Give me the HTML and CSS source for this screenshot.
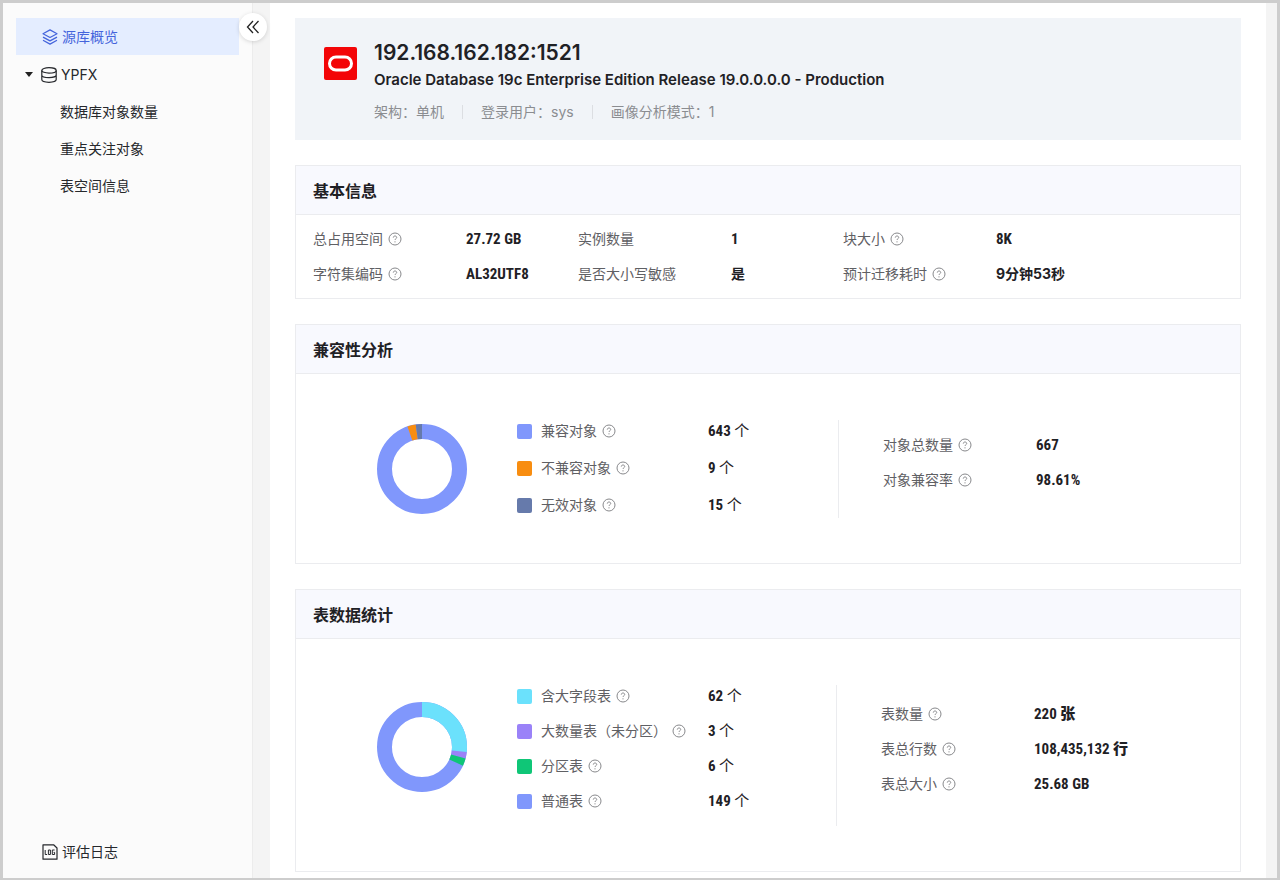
FILE: index.html
```html
<!DOCTYPE html>
<html lang="zh-CN">
<head>
    <meta charset="UTF-8">
    <title>源库概览</title>
    <link rel="stylesheet" href="styles.css">
</head>
<body>
    <svg class="sprite" aria-hidden="true">
        <symbol id="help" viewBox="0 0 14 14">
            <circle cx="7" cy="7" r="6" fill="none" stroke="currentColor"/>
            <path d="M5.3 5.6C5.3 4.6 6 4 7 4s1.7.6 1.7 1.5c0 1.2-1.7 1.3-1.7 2.5" fill="none" stroke="currentColor"/>
            <circle cx="7" cy="9.8" r=".65" fill="currentColor"/>
        </symbol>
    </svg>

    <aside class="sidebar">
        <nav class="menu">
            <a class="menu-item active" href="#">
                <svg class="icon" viewBox="0 0 16 16"><path d="M8 .9 15 4.7 8 8.5 1 4.7zM1 8.1l7 3.8 7-3.8M1 11.3l7 3.8 7-3.8"/></svg>
                源库概览
            </a>
            <button class="menu-item" type="button" aria-expanded="true">
                <span class="caret"></span>
                <svg class="icon" viewBox="0 0 16 16"><ellipse cx="8" cy="3.4" rx="7.2" ry="2.7"/><path d="M.8 3.4v9.2c0 1.5 3.2 2.7 7.2 2.7s7.2-1.2 7.2-2.7V3.4M.8 8c0 1.5 3.2 2.7 7.2 2.7s7.2-1.2 7.2-2.7"/></svg>
                YPFX
            </button>
            <a class="menu-item sub" href="#">数据库对象数量</a>
            <a class="menu-item sub" href="#">重点关注对象</a>
            <a class="menu-item sub" href="#">表空间信息</a>
        </nav>
        <a class="menu-item" href="#">
            <svg class="icon" viewBox="0 0 16 16"><path d="M1 .8h10.6L15 4v11.2H1z"/><path class="thin" d="M3.2 6v4.5h1.9M6.4 6h2v4.5h-2zM12.6 6h-2.3v4.5h2.3V8.4h-1"/></svg>
            评估日志
        </a>
        <button class="collapse" type="button" aria-label="收起">
            <svg viewBox="0 0 16 16"><path d="M8 2 2.5 8 8 14M13.5 2 8 8l5.500 6"/></svg>
        </button>
    </aside>

    <main class="content">
        <header class="hero">
            <svg class="logo" viewBox="0 0 33 33"><rect width="33" height="33" rx="2" fill="#f30507"/><rect x="5.500" y="10" width="22" height="13" rx="6.500" fill="none" stroke="#fff" stroke-width="3"/></svg>
            <div>
                <h1>192.168.162.182:1521</h1>
                <h2>Oracle Database 19c Enterprise Edition Release 19.0.0.0.0 - Production</h2>
                <ul class="meta">
                    <li>架构：单机</li>
                    <li>登录用户：sys</li>
                    <li>画像分析模式：1</li>
                </ul>
            </div>
        </header>

        <section class="card">
            <h3>基本信息</h3>
            <dl class="info">
                <div class="row"><dt>总占用空间 <svg class="help"><use href="#help"/></svg></dt><dd class="num">27.72 GB</dd></div>
                <div class="row"><dt>实例数量</dt><dd class="num">1</dd></div>
                <div class="row"><dt>块大小 <svg class="help"><use href="#help"/></svg></dt><dd class="num">8K</dd></div>
                <div class="row"><dt>字符集编码 <svg class="help"><use href="#help"/></svg></dt><dd class="num">AL32UTF8</dd></div>
                <div class="row"><dt>是否大小写敏感</dt><dd>是</dd></div>
                <div class="row"><dt>预计迁移耗时 <svg class="help"><use href="#help"/></svg></dt><dd>9分钟53秒</dd></div>
            </dl>
        </section>

        <section class="card">
            <h3>兼容性分析</h3>
            <div class="analysis">
                <div class="chart">
                    <!-- ring segments: pathLength is the number of objects -->
                    <svg class="donut" viewBox="0 0 90 90">
                        <circle class="blue" cx="45" cy="45" r="37.500"/>
                        <circle class="orange" cx="45" cy="45" r="37.500" pathLength="667" stroke-dasharray="20 647" stroke-dashoffset="35"/>
                        <circle class="slate" cx="45" cy="45" r="37.500" pathLength="667" stroke-dasharray="15 652" stroke-dashoffset="15"/>
                    </svg>
                    <dl class="legend">
                        <div class="row"><dt><i class="swatch blue"></i>兼容对象 <svg class="help"><use href="#help"/></svg></dt><dd class="num">643 <span>个</span></dd></div>
                        <div class="row"><dt><i class="swatch orange"></i>不兼容对象 <svg class="help"><use href="#help"/></svg></dt><dd class="num">9 <span>个</span></dd></div>
                        <div class="row"><dt><i class="swatch slate"></i>无效对象 <svg class="help"><use href="#help"/></svg></dt><dd class="num">15 <span>个</span></dd></div>
                    </dl>
                </div>
                <dl class="totals">
                    <div class="row"><dt>对象总数量 <svg class="help"><use href="#help"/></svg></dt><dd class="num">667</dd></div>
                    <div class="row"><dt>对象兼容率 <svg class="help"><use href="#help"/></svg></dt><dd class="num">98.61%</dd></div>
                </dl>
            </div>
        </section>

        <section class="card">
            <h3>表数据统计</h3>
            <div class="analysis tables">
                <div class="chart">
                    <!-- ring segments: pathLength is the number of tables -->
                    <svg class="donut" viewBox="0 0 90 90">
                        <circle class="blue" cx="45" cy="45" r="37.500"/>
                        <circle class="cyan" cx="45" cy="45" r="37.500" pathLength="220" stroke-dasharray="60 160"/>
                        <circle class="purple" cx="45" cy="45" r="37.500" pathLength="220" stroke-dasharray="5 215" stroke-dashoffset="-59"/>
                        <circle class="green" cx="45" cy="45" r="37.500" pathLength="220" stroke-dasharray="6 214" stroke-dashoffset="-64"/>
                    </svg>
                    <dl class="legend">
                        <div class="row"><dt><i class="swatch cyan"></i>含大字段表 <svg class="help"><use href="#help"/></svg></dt><dd class="num">62 <span>个</span></dd></div>
                        <div class="row"><dt><i class="swatch purple"></i>大数量表（未分区） <svg class="help"><use href="#help"/></svg></dt><dd class="num">3 <span>个</span></dd></div>
                        <div class="row"><dt><i class="swatch green"></i>分区表 <svg class="help"><use href="#help"/></svg></dt><dd class="num">6 <span>个</span></dd></div>
                        <div class="row"><dt><i class="swatch blue"></i>普通表 <svg class="help"><use href="#help"/></svg></dt><dd class="num">149 <span>个</span></dd></div>
                    </dl>
                </div>
                <dl class="totals">
                    <div class="row"><dt>表数量 <svg class="help"><use href="#help"/></svg></dt><dd class="num">220 <b>张</b></dd></div>
                    <div class="row"><dt>表总行数 <svg class="help"><use href="#help"/></svg></dt><dd class="num">108,435,132 <b>行</b></dd></div>
                    <div class="row"><dt>表总大小 <svg class="help"><use href="#help"/></svg></dt><dd class="num">25.68 GB</dd></div>
                </dl>
            </div>
        </section>
    </main>
</body>
</html>
```
FILE: styles.css
```css
* {
    box-sizing: border-box;
}
body {
    margin: 0;
    min-height: 100vh;
    display: flex;
    border: 3px solid #cdcdcd;
    background: #f4f4f4;
    font-family: Inter, "Noto Sans CJK SC", sans-serif;
    font-size: 14px;
    line-height: 24px;
    color: #1f2125;
}
h1, h2, h3, dl, dd, ul {
    margin: 0;
    padding: 0;
}
.sprite {
    display: none;
}

/* sidebar */
.sidebar {
    position: relative;
    flex: none;
    width: 250px;
    padding: 15px 13px 8px;
    display: flex;
    flex-direction: column;
    justify-content: space-between;
    background: #fbfbfb;
    border-right: 1px solid #ececec;
}
.menu-item {
    display: flex;
    align-items: center;
    gap: 4px;
    width: 100%;
    height: 37px;
    padding: 0 0 0 26px;
    border: none;
    background: none;
    font: inherit;
    color: #26282c;
    text-decoration: none;
    cursor: pointer;
}
.menu-item.active {
    margin-bottom: 1px;
    background: #e4edff;
    color: #4464dc;
}
.menu-item.sub {
    padding-left: 44px;
}
button.menu-item {
    padding-left: 9px;
}
.menu {
    display: grid;
}
.caret {
    margin-right: 4px;
    border: 4px solid transparent;
    border-top: 5px solid #222;
    border-bottom: none;
}
.icon {
    flex: none;
    width: 16px;
    height: 16px;
    fill: none;
    stroke: currentColor;
    stroke-width: 1.2;
    stroke-linejoin: round;
}
.icon .thin {
    stroke-width: 1;
}
.collapse {
    position: absolute;
    top: 10px;
    right: -15px;
    width: 28px;
    height: 28px;
    padding: 6px;
    border: none;
    border-radius: 50%;
    background: #fff;
    box-shadow: 0 1px 4px rgba(0,0,0,0.15);
    cursor: pointer;
}
.collapse svg {
    display: block;
    fill: none;
    stroke: #222;
    stroke-width: 1.3;
}

/* content */
.content {
    flex: 1;
    margin: 0 11px 0 17px;
    padding: 15px 25px 6px;
    display: flex;
    flex-direction: column;
    gap: 25px;
    background: #fff;
}
.hero {
    display: flex;
    gap: 17px;
    padding: 22px 29px 16px;
    background: #f1f4f8;
}
.logo {
    width: 33px;
    height: 33px;
    margin-top: 7px;
}
.hero h1 {
    font-size: 21px;
    font-weight: 600;
    line-height: 26px;
}
.hero h2 {
    font-size: 15px;
    font-weight: 600;
    line-height: 28px;
}
.meta {
    display: flex;
    margin-top: 6px;
    list-style: none;
    color: #8b8d91;
}
.meta li {
    display: flex;
    align-items: center;
}
.meta li + li::before {
    content: "";
    height: 14px;
    margin: 0 18px;
    border-left: 1px solid #dcdee2;
}
.card {
    border: 1px solid #ebecef;
}
.card h3 {
    padding: 2px 17px 0;
    border-bottom: 1px solid #ebecef;
    background: #f8f9fe;
    font-size: 16px;
    font-weight: 700;
    line-height: 46px;
}
.info {
    display: grid;
    grid-template-columns: repeat(3, 1fr);
    row-gap: 11px;
    padding: 12px 132px 12px 17px;
}
.row {
    display: flex;
    align-items: center;
    height: 24px;
    white-space: nowrap;
}
.row dt {
    display: flex;
    align-items: center;
    gap: 5px;
    flex: none;
    width: 153px;
    color: #5f6064;
}
.row dd {
    font-weight: 700;
}
.row .num {
    font-family: "Roboto Condensed", "Open Sans Condensed", Roboto, "Noto Sans CJK SC", sans-serif;
    font-size: 15px;
}
.num span {
    font-weight: 400;
}
.help {
    flex: none;
    width: 14px;
    height: 14px;
    color: #88898c;
}

/* donut, legend and totals */
.analysis {
    display: flex;
    align-items: center;
    padding: 46px 0 45px;
}
.chart {
    flex: none;
    display: flex;
    align-items: center;
    gap: 50px;
    width: 542px;
    padding-left: 81px;
}
.donut {
    width: 90px;
    height: 90px;
    fill: none;
    stroke-width: 15;
    transform: rotate(-90deg);
}
.legend {
    display: grid;
    gap: 15px;
    padding-bottom: 2px;
}
.legend .row {
    height: 22px;
}
.legend .row dt {
    width: 191px;
}
.swatch {
    width: 15px;
    height: 15px;
    margin-right: 4px;
    border-radius: 2px;
}
.totals {
    align-self: stretch;
    display: flex;
    flex-direction: column;
    justify-content: center;
    gap: 11px;
    padding: 0 0 14px 44px;
    border-left: 1px solid #ebecef;
}
.tables .chart {
    width: 540px;
}
.tables .donut {
    margin-bottom: 18px;
}
.tables .legend {
    gap: 13px;
    padding-bottom: 14px;
}

.blue { stroke: #8097fc; background: #8097fc; }
.orange { stroke: #f88d10; background: #f88d10; }
.slate { stroke: #667aab; background: #667aab; }
.cyan { stroke: #6be1fc; background: #6be1fc; }
.purple { stroke: #9a82f8; background: #9a82f8; }
.green { stroke: #0fc677; background: #0fc677; }
```
